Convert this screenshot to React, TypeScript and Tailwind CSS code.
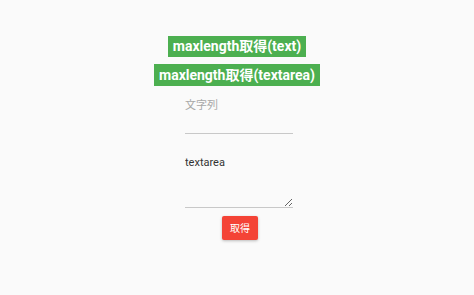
import React from "react";

export default function App() {
  return (
    <div className="w-[474px] h-[295px] bg-[#fafafa] flex flex-col items-center pt-[36px]" style={{ fontFamily: "Roboto, 'Noto Sans CJK JP', sans-serif" }}>
      <div className="bg-[#4caf50] text-white font-bold text-[14px] leading-[21px] px-[5px]">maxlength取得(text)</div>
      <div className="mt-[7px] bg-[#4caf50] text-white font-bold text-[14px] leading-[22px] px-[5px]">maxlength取得(textarea)</div>
      <div className="w-[108px] ml-[4px] mt-[9px] flex flex-col">
        <input
          placeholder="文字列"
          className="w-full h-[39px] bg-transparent border-b border-[#c8c8c8] text-[11px] text-[#333] outline-none placeholder:text-[#a8a8a8] pb-[18px]"
        />
        <textarea
          defaultValue="textarea"
          className="mt-[16px] w-full h-[58px] bg-transparent border-b border-[#c8c8c8] text-[11px] text-[#333] outline-none resize-y pt-[5px]"
        />
      </div>
      <button className="mt-[8px] ml-[6px] w-[36px] h-[24px] bg-[#f44336] text-white text-[10px] rounded-[2px] shadow-[0_1px_3px_rgba(0,0,0,0.25)]">取得</button>
    </div>
  );
}
